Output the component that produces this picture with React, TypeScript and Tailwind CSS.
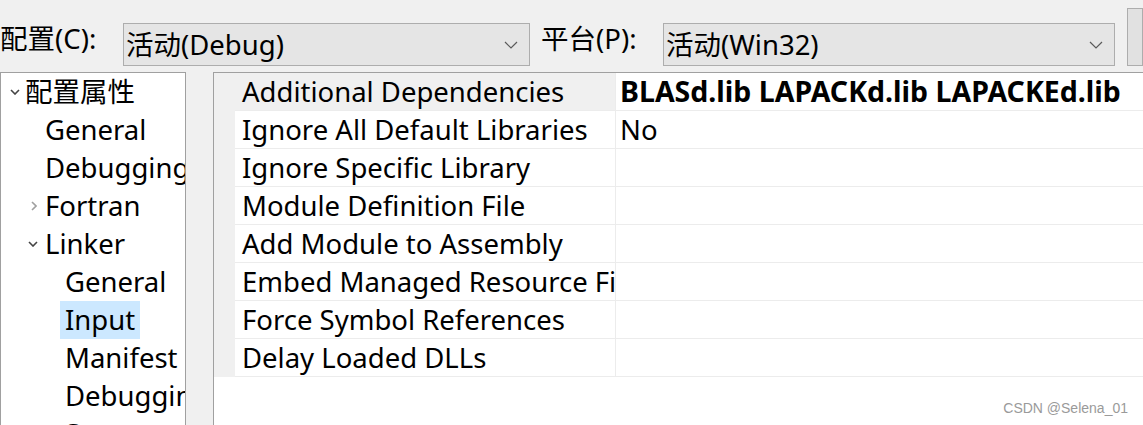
import React from 'react'

const font = { fontFamily: '"Noto Sans", "Noto Sans CJK SC", sans-serif' }

interface TreeItem {
  label: string
  level: number
  arrow?: 'down' | 'right'
  selected?: boolean
}

const treeItems: TreeItem[] = [
  { label: '配置属性', level: 0, arrow: 'down' },
  { label: 'General', level: 1 },
  { label: 'Debugging', level: 1 },
  { label: 'Fortran', level: 1, arrow: 'right' },
  { label: 'Linker', level: 1, arrow: 'down' },
  { label: 'General', level: 2 },
  { label: 'Input', level: 2, selected: true },
  { label: 'Manifest File', level: 2 },
  { label: 'Debugging', level: 2 },
  { label: 'System', level: 2 },
]

const props: { name: string; value?: string; bold?: boolean }[] = [
  { name: 'Additional Dependencies', value: 'BLASd.lib LAPACKd.lib LAPACKEd.lib', bold: true },
  { name: 'Ignore All Default Libraries', value: 'No' },
  { name: 'Ignore Specific Library' },
  { name: 'Module Definition File' },
  { name: 'Add Module to Assembly' },
  { name: 'Embed Managed Resource File' },
  { name: 'Force Symbol References' },
  { name: 'Delay Loaded DLLs' },
]

function Chevron({ dir, className }: { dir: 'down' | 'right'; className?: string }) {
  return dir === 'down' ? (
    <svg width="10" height="6" viewBox="0 0 10 6" className={className}>
      <path d="M1 1 L5 5 L9 1" fill="none" stroke="currentColor" strokeWidth="1.6" />
    </svg>
  ) : (
    <svg width="6" height="10" viewBox="0 0 6 10" className={className}>
      <path d="M1 1 L5 5 L1 9" fill="none" stroke="currentColor" strokeWidth="1.6" />
    </svg>
  )
}

function Combo({ text, width }: { text: string; width: string }) {
  return (
    <div className={`${width} h-[43px] flex items-center justify-between bg-[#e5e5e5] border border-[#adadad] pl-[2px] pr-[11px]`}>
      <span className="text-[27.5px] leading-none text-black">{text}</span>
      <svg width="14" height="8" viewBox="0 0 14 8" className="text-[#5a5a5a]">
        <path d="M1 1 L7 7 L13 1" fill="none" stroke="currentColor" strokeWidth="1.2" />
      </svg>
    </div>
  )
}

export default function App() {
  return (
    <div className="relative w-[1143px] h-[425px] bg-[#f0f0f0] overflow-hidden text-black" style={font}>
      {/* header */}
      <div className="h-[72px] flex items-start">
        <span className="mt-[21px] text-[27.5px] leading-[36px] w-[123px] shrink-0">配置(C):</span>
        <div className="mt-[23px]"><Combo text="活动(Debug)" width="w-[407px]" /></div>
        <span className="mt-[21px] ml-[11px] text-[27.5px] leading-[36px] w-[122px] shrink-0">平台(P):</span>
        <div className="mt-[23px]"><Combo text="活动(Win32)" width="w-[452px]" /></div>
        <div className="mt-[8px] ml-[12px] w-[40px] h-[58px] bg-[#e1e1e1] border border-[#adadad]" />
      </div>

      <div className="flex h-[353px]">
        {/* tree */}
        <div className="w-[186px] shrink-0 h-full bg-white border-l border-t border-r border-[#a0a0a0] overflow-hidden">
          {treeItems.map((item, i) => (
            <div key={i} className="relative h-[38px] flex items-center whitespace-nowrap"
              style={{ paddingLeft: item.level === 0 ? 19 : item.level === 1 ? 39 : 59 }}>
              {item.arrow && (
                <Chevron
                  dir={item.arrow}
                  className={`absolute top-1/2 -translate-y-1/2 ${item.level === 0 ? 'left-[9px]' : item.arrow === 'right' ? 'left-[30px]' : 'left-[27px]'} ${item.arrow === 'right' ? 'text-[#a0a0a0]' : 'text-[#444]'}`}
                />
              )}
              <span className={`h-[38px] flex items-center px-[5px] text-[27.5px] ${item.selected ? 'bg-[#cce8ff]' : ''}`}>
                {item.label}
              </span>
            </div>
          ))}
        </div>

        {/* property grid */}
        <div className="ml-[27px] flex-1 h-full bg-white border-l border-t border-[#a0a0a0] overflow-hidden">
          {props.map((p, i) => (
            <div key={i} className="flex h-[38px]">
              <div className="w-[21px] shrink-0 bg-[#f0f0f0]" />
              <div className={`w-[381px] shrink-0 pl-[7px] flex items-center whitespace-nowrap overflow-hidden border-b border-r border-[#ececec] text-[27.5px] ${i === 0 ? 'bg-[#f0f0f0]' : 'bg-white'}`}>
                {p.name}
              </div>
              <div className={`flex-1 pl-[4px] flex items-center whitespace-nowrap border-b border-[#ececec] ${p.bold ? 'font-bold text-[28.5px]' : 'text-[27.5px]'}`}>
                {p.value}
              </div>
            </div>
          ))}
        </div>
      </div>

      <span className="absolute right-[15px] bottom-[6px] text-[14px] text-[#9a9a9a]" style={{ fontFamily: '"Liberation Sans", Arial, sans-serif' }}>
        CSDN @Selena_01
      </span>
    </div>
  )
}
